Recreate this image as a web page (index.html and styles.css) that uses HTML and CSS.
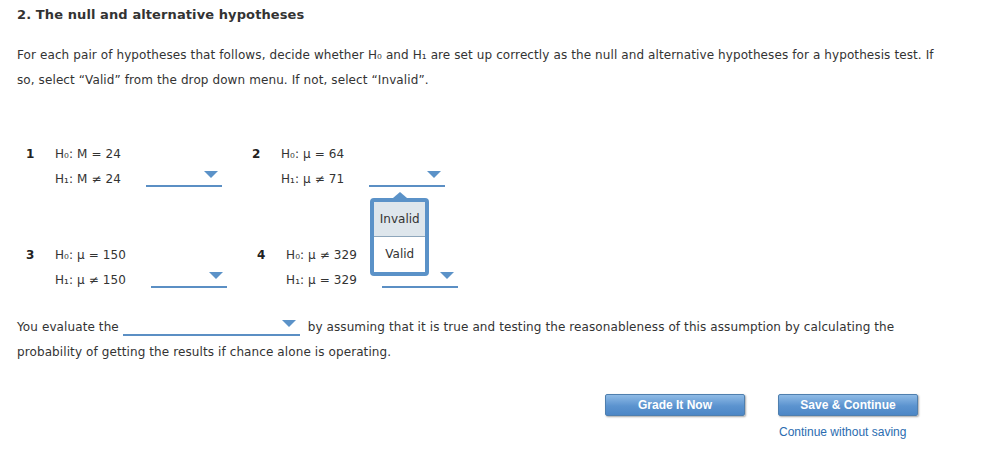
FILE: index.html
```html
<!DOCTYPE html>
<html>
<head>
<meta charset="utf-8">
<link rel="stylesheet" href="styles.css">
</head>
<body>
<div class="page">
  <h2 class="title">2. The null and alternative hypotheses</h2>
  <p class="intro">For each pair of hypotheses that follows, decide whether H₀ and H₁ are set up correctly as the null and alternative hypotheses for a hypothesis test. If so, select “Valid” from the drop down menu. If not, select “Invalid”.</p>

  <div class="prow row1">
    <div class="item">
      <div class="num">1</div>
      <div class="hyps"><div>H₀: M = 24</div><div>H₁: M ≠ 24</div></div>
      <div class="dd"><span class="tri"></span></div>
    </div>
    <div class="item">
      <div class="num">2</div>
      <div class="hyps"><div>H₀: μ = 64</div><div>H₁: μ ≠ 71</div></div>
      <div class="dd open"><span class="tri"></span>
        <div class="menu">
          <div class="opt sel">Invalid</div>
          <div class="opt">Valid</div>
        </div>
      </div>
    </div>
  </div>

  <div class="prow row2">
    <div class="item">
      <div class="num">3</div>
      <div class="hyps"><div>H₀: μ = 150</div><div>H₁: μ ≠ 150</div></div>
      <div class="dd"><span class="tri"></span></div>
    </div>
    <div class="item">
      <div class="num">4</div>
      <div class="hyps"><div>H₀: μ ≠ 329</div><div>H₁: μ = 329</div></div>
      <div class="dd"><span class="tri"></span></div>
    </div>
  </div>

  <p class="sentence">You evaluate the <span class="dd wide"><span class="tri"></span></span> by assuming that it is true and testing the reasonableness of this assumption by calculating the probability of getting the results if chance alone is operating.</p>

  <div class="actions">
    <div class="btnrow">
      <button class="btn">Grade It Now</button>
      <div class="savecol">
        <button class="btn">Save &amp; Continue</button>
        <a class="link" href="#">Continue without saving</a>
      </div>
    </div>
  </div>
</div>
</body>
</html>
```

FILE: styles.css
```css
html, body {
  margin: 0;
  padding: 0;
  background: #ffffff;
}
body {
  font-family: "DejaVu Sans", Verdana, sans-serif;
  font-size: 12px;
  letter-spacing: 0.1px;
  color: #333333;
}
.page {
  padding: 0 40px 0 17px;
}
.title {
  font-size: 13px;
  font-weight: bold;
  margin: 0;
  padding-top: 6px;
  line-height: 18px;
  color: #333;
}
.intro {
  margin: 19px 0 0 0;
  line-height: 25px;
}
.prow {
  display: flex;
  gap: 30px;
  padding-left: 9px;
}
.row1 { margin-top: 49px; }
.row2 { margin-top: 51px; }
.item {
  display: flex;
  align-items: flex-start;
}
.num {
  font-weight: bold;
  width: 29px;
  line-height: 25px;
  color: #222;
}
.hyps {
  line-height: 25px;
}
.item .dd {
  margin-left: 25px;
  margin-top: 27px;
}
.dd {
  position: relative;
  display: inline-block;
  width: 76px;
  height: 16px;
  border-bottom: 2px solid #5b8fc4;
  vertical-align: -5px;
}
.tri {
  position: absolute;
  right: 4px;
  top: 2px;
  width: 0;
  height: 0;
  border-left: 7px solid transparent;
  border-right: 7px solid transparent;
  border-top: 7px solid #5b92c8;
}
.dd.wide {
  width: 177px;
  margin-right: 4px;
}
.menu {
  position: absolute;
  left: 1px;
  top: 29px;
  width: 51px;
  background: #fff;
  border: 4px solid #5b92c8;
  border-radius: 4px;
  text-align: center;
  color: #333;
  letter-spacing: 0;
}
.menu::before {
  content: "";
  position: absolute;
  left: 19px;
  top: -10px;
  border-left: 7px solid transparent;
  border-right: 7px solid transparent;
  border-bottom: 6px solid #5b92c8;
}
.opt {
  height: 35px;
  line-height: 35px;
}
.opt.sel {
  background: #dee6ec;
  border-bottom: 1px solid #8ea6bb;
  height: 34px;
  line-height: 34px;
}
.sentence {
  margin: 22px 0 0 0;
  line-height: 25px;
}
.actions {
  display: flex;
  justify-content: flex-end;
  padding-right: 23px;
  margin-top: 29px;
}
.btnrow {
  display: flex;
  gap: 33px;
  align-items: flex-start;
}
.savecol {
  display: flex;
  flex-direction: column;
  align-items: flex-start;
}
.btn {
  width: 140px;
  height: 22px;
  border: 1px solid #4f7fae;
  border-radius: 2px;
  background: linear-gradient(#8fbbe6, #5b93cf 55%, #4d87c6);
  color: #ffffff;
  font-family: "Liberation Sans", Arial, sans-serif;
  font-weight: bold;
  font-size: 12px;
  letter-spacing: 0;
  box-shadow: 1px 1px 2px rgba(0,0,0,0.35);
  padding: 0;
  cursor: pointer;
}
.link {
  font-family: "Liberation Sans", Arial, sans-serif;
  font-size: 12px;
  letter-spacing: 0;
  color: #2b6cb0;
  text-decoration: none;
  margin-top: 9px;
  margin-left: 1px;
}
```
